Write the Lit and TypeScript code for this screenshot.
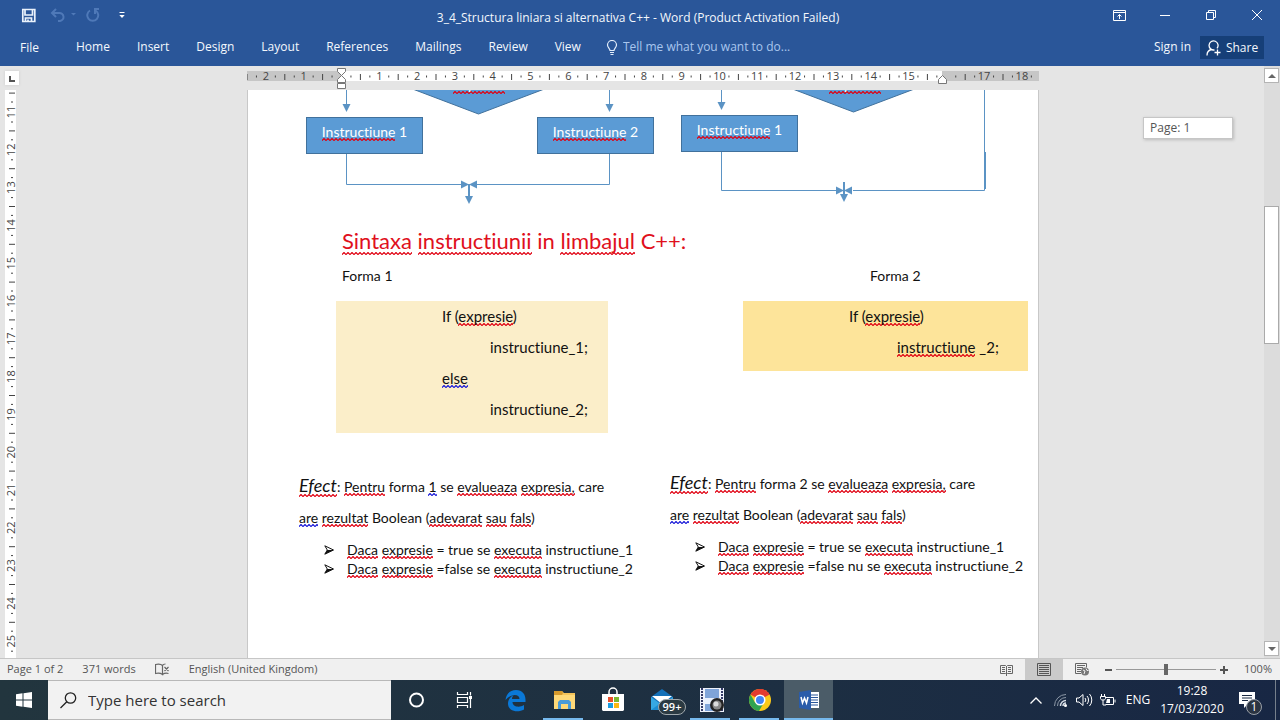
import { LitElement, html, svg, css } from "lit";
import { customElement } from "lit/decorators.js";

const CM = 37.8;

// "~word~" gets the red spelling mark, "^word^" the blue grammar mark.
const marked = (text: string) =>
  text.split(/(~[^~]+~|\^[^^]+\^)/).map((part) =>
    part.startsWith("~")
      ? html`<span class="spell">${part.slice(1, -1)}</span>`
      : part.startsWith("^")
        ? html`<span class="grammar">${part.slice(1, -1)}</span>`
        : part
  );

const range = (from: number, to: number) => Array.from({ length: to - from + 1 }, (_, i) => from + i);

@customElement("word-ribbon")
class WordRibbon extends LitElement {
  static styles = css`
    :host { display: block; background: #2a5699; color: #f4f8fd; font: 12px/16px "Open Sans", sans-serif; }
    button { all: unset; box-sizing: border-box; display: flex; align-items: center; justify-content: center; white-space: nowrap; }
    svg { display: block; }
    .title { display: grid; grid-template-columns: 1fr auto 1fr; height: 34px; align-items: center; }
    .quick { display: flex; align-items: center; padding: 0 0 4px 21px; }
    .quick .undo { margin-left: 14px; }
    .quick .redo { margin-left: 8px; }
    .quick .more { margin-left: 19px; }
    .name { padding: 1px 4px 0 0; }
    .window { display: flex; justify-content: flex-end; padding-bottom: 4px; }
    .window button { width: 46px; height: 30px; }
    .tabs { display: flex; height: 32px; align-items: flex-start; }
    nav { display: flex; gap: 1px; }
    nav button { height: 26px; padding: 0 13px; }
    nav .file { padding: 1px 23px 0 20px; }
    .tell { display: flex; align-items: center; gap: 5px; height: 26px; margin-left: 12px; flex: 1; }
    .tell input { all: unset; flex: 1; color: #b5cdf0; }
    .tell input::placeholder { color: #a9c6ee; opacity: 1; }
    .account { display: flex; align-items: center; gap: 9px; padding-right: 16px; }
    .account button { height: 26px; }
    .account .share { background: #163f78; height: 23px; width: 64px; gap: 5px; margin-top: 1px; }
  `;
  render() {
    return html`
      <div class="title">
        <div class="quick">
          <button aria-label="Save"><svg width="15" height="15" viewBox="0 0 15 15"><path d="M1.800 1.500h12v12h-12zM4 1.500v5.500h7.500V1.500M4.500 13.500v-3.500h6v3.500M7 11.500v2" fill="none" stroke="#eaf2fc" stroke-width="1.700"/></svg></button>
          <button class="undo" aria-label="Undo"><svg width="28" height="14" viewBox="0 0 28 14"><path d="M6 1L2 5l4 4M2 5h7a4 4 0 0 1 1 8H8" fill="none" stroke="#4f79b8" stroke-width="2"/><path d="M21 5h5l-2.500 2.500z" fill="#4f79b8"/></svg></button>
          <button class="redo" aria-label="Repeat"><svg width="14" height="14" viewBox="0 0 14 14"><path d="M8 1h5M9 1v5M9.500 2.500A5.500 5.500 0 1 1 4 2.500" fill="none" stroke="#4f79b8" stroke-width="2"/></svg></button>
          <button class="more" aria-label="Customise toolbar"><svg width="6" height="8" viewBox="0 0 6 8"><path d="M.5 1.500h5" stroke="#fff"/><path d="M.3 4h5.400L3 7z" fill="#fff"/></svg></button>
        </div>
        <div class="name">3_4_Structura liniara si alternativa C++ - Word (Product Activation Failed)</div>
        <div class="window">
          <button aria-label="Ribbon display options"><svg width="13" height="11" viewBox="0 0 13 11"><path d="M.5.5h12v10H.5zM.5 2.500h12M6.500 9V4.500M4.500 6.500l2-2 2 2" fill="none" stroke="#fff"/></svg></button>
          <button aria-label="Minimise"><svg width="10" height="10" viewBox="0 0 10 10"><path d="M0 5.500h10" stroke="#fff"/></svg></button>
          <button aria-label="Restore"><svg width="10" height="10" viewBox="0 0 10 10"><path d="M.5 2.500h7v7h-7zM2.500 2.500v-2h7v7h-2" fill="none" stroke="#fff"/></svg></button>
          <button aria-label="Close"><svg width="10" height="10" viewBox="0 0 10 10"><path d="M0 0l10 10M10 0L0 10" stroke="#fff"/></svg></button>
        </div>
      </div>
      <div class="tabs">
        <nav>
          <button class="file">File</button>
          ${["Home", "Insert", "Design", "Layout", "References", "Mailings", "Review", "View"].map((t) => html`<button>${t}</button>`)}
        </nav>
        <label class="tell">
          <svg width="12" height="15" viewBox="0 0 12 15"><path d="M4 10.500C4 8.500 1.500 7.500 1.500 5a4.500 4.500 0 0 1 9 0c0 2.500-2.500 3.500-2.500 5.500zM4 12.500h4M4.500 14.500h3" fill="none" stroke="#e4eefb" stroke-width="1.200"/></svg>
          <input type="text" aria-label="Tell me what you want to do" placeholder="Tell me what you want to do..." />
        </label>
        <div class="account">
          <button>Sign in</button>
          <button class="share"><svg width="15" height="16" viewBox="0 0 15 16"><path d="M1 15.500c0-3.500 2-5.500 4.500-6M8.500 9.800a4.500 4.500 0 1 1 2.500-1.500M5 9.300c1 .8 2.200 1 3.500 .5M11.500 9.500v6M8.500 12.500h6" fill="none" stroke="#fff" stroke-width="1.300"/></svg>Share</button>
        </div>
      </div>`;
  }
}

@customElement("word-document")
class WordDocument extends LitElement {
  static styles = css`
    :host { display: grid; grid-template: 24px minmax(0, 1fr) / 22px minmax(0, 1fr) 16px; min-height: 0; background: #e5e5e5; color: #111; position: relative; }
    svg { display: block; }
    .tabstop { all: unset; align-self: center; width: 14px; height: 14px; margin-left: 5px; background: #fff; box-shadow: 0 0 3px #ccc; }
    .hruler { display: flex; justify-content: center; }
    .vruler { width: 18px; overflow: hidden; }
    .num { font: 11px "Open Sans", sans-serif; fill: #444; text-anchor: middle; }
    .view { display: flex; justify-content: center; overflow: hidden; }
    .page { box-sizing: border-box; width: 792px; background: #fff; border: solid #c8c8c8; border-width: 0 1px; font: 14px/32px Lato, sans-serif; font-variant-ligatures: none; }
    .spell, .grammar { padding-bottom: 1px; background: left bottom / 4px 3px repeat-x; }
    .spell { background-image: url("data:image/svg+xml,%3Csvg xmlns='http://www.w3.org/2000/svg' width='4' height='3'%3E%3Cpath d='M-1 3.500L2 .5L5 3.500' fill='none' stroke='%23e00010' stroke-width='1.200'/%3E%3C/svg%3E"); }
    .grammar { background-image: url("data:image/svg+xml,%3Csvg xmlns='http://www.w3.org/2000/svg' width='4' height='3'%3E%3Cpath d='M-1 3.500L2 .5L5 3.500' fill='none' stroke='%231818d8' stroke-width='1.200'/%3E%3C/svg%3E"); }
    .diagram { position: relative; height: 130px; overflow: hidden; }
    .node { position: absolute; box-sizing: border-box; width: 117px; height: 37px; border: 1px solid #41719c; background: #5b9bd5; color: #fff; line-height: 28px; text-align: center; }
    .cond { position: absolute; color: #fff; line-height: 20px; top: -15px; }
    h1 { margin: 0; padding-left: 94px; font-size: 22px; line-height: 41px; font-weight: 400; color: #e0101c; }
    .forms { display: grid; grid-template-columns: 272px 285px; column-gap: 135px; padding-left: 88px; align-items: start; }
    .forms p { margin: 0; line-height: 29px; padding-left: 6px; }
    .forms .second { padding-left: 127px; }
    .code { margin: 11px 0 0; padding: 0 0 8px 106px; background: #fbeec9; font-size: 15px; line-height: 31px; }
    .code.strong { background: #fde49a; }
    .code .in { padding-left: 48px; }
    .effects { display: grid; grid-template-columns: 371px 1fr; padding: 33px 0 0 51px; }
    .effects p { margin: 0; height: 33px; white-space: nowrap; }
    .effects em { font-size: 18px; }
    .effects .first { padding-top: 3px; }
    ul { margin: 5px 0 0; padding: 0 0 0 25px; list-style: none; line-height: 19px; }
    li { display: flex; align-items: center; gap: 13px; white-space: nowrap; }
    .scroll { grid-column: 3; grid-row: 1 / 3; display: flex; flex-direction: column; background: #dcdcdc; padding: 2px 1px 2px 0; }
    .scroll button { all: unset; box-sizing: border-box; height: 15px; border: 1px solid #b4b4b4; background: #fff; display: grid; place-items: center; }
    .track { flex: 1; display: grid; grid-template-rows: 123fr 138fr 297fr; }
    .thumb { grid-row: 2; background: #fff; border: 1px solid #aaa; }
    .tip { position: absolute; right: 47px; top: 51px; box-sizing: border-box; width: 90px; height: 22px; border: 1px solid #c6c6c6; background: #fff; box-shadow: 1px 1px 3px #bbb; color: #555; font: 12px/20px "Open Sans", sans-serif; padding-left: 6px; }
  `;

  hruler() {
    const zero = 2.5 * CM;
    return html`<svg width="792" height="24" viewBox="0 0 792 24">
      <path d="M0 5h792v10H0z" fill="#c6c6c6"/><path d="M95 5h600v10H95z" fill="#fff"/>
      ${range(-2, 18).map((n) => {
        const x = zero + n * CM;
        return svg`${n === 0 || n === 16 ? "" : svg`<text class="num" x=${x} y="14">${Math.abs(n)}</text>`}
          <path d="M${x - CM / 4} 9.500v2M${x + CM / 4} 9.500v2M${x - CM / 2} 8v6" stroke="#444"/>`;
      })}
      <g fill="#fff" stroke="#777"><path d="M90.500 2.500h8v3l-4 4-4-4zM90.500 16.500v-3l4-4 4 4v3zM90.500 17.500h8v5h-8zM691.500 17.500v-4l4-4 4 4v4z"/></g>
    </svg>`;
  }

  vruler() {
    return html`<svg width="18" height="568" viewBox="0 0 18 568">
      <path d="M5 0h11v568H5z" fill="#fff"/>
      ${range(11, 25).map((n) => {
        const y = 22 + (n - 11) * CM;
        return svg`<text class="num" transform="translate(15 ${y}) rotate(-90)">${n}</text>
          <path d="M11 ${y - 10}h2M11 ${y + 10}h2M9 ${y - CM / 2}h6" stroke="#444"/>`;
      })}
    </svg>`;
  }

  bullet(text: string) {
    return html`<li><svg width="10" height="10" viewBox="0 0 10 10"><path d="M.8 .8L9.500 5L.8 9.200L3.300 5z" fill="none" stroke="#111"/><path d="M3.300 5h6.200L.8 9.200z" fill="#111"/></svg><span>${marked(text)}</span></li>`;
  }

  render() {
    return html`
      <button class="tabstop" aria-label="Tab selector"><svg width="14" height="14" viewBox="0 0 14 14"><path d="M5 5v5h5" fill="none" stroke="#555" stroke-width="2"/></svg></button>
      <div class="hruler">${this.hruler()}</div>
      <div class="vruler">${this.vruler()}</div>
      <div class="view">
        <article class="page">
          <div class="diagram">
            <svg width="789" height="130" viewBox="1 0 789 130">
              <g fill="#5b9bd5" stroke="#41719c"><path d="M163 -2L231.500 24L300 -2zM543 -2L606.500 22L670 -2z"/></g>
              <g fill="none" stroke="#5b93c4">
                <path d="M99.500 0v15M362.500 0v15M99.500 64v30.500H215M362.500 64v30.500H230M474.500 0v13M474.500 62v38.500H590M737.500 0v100.500H606"/>
                <path d="M222 94v14M597 92v12M738 62v37" stroke-width="2"/>
              </g>
              <path d="M95.500 14h8l-4 8zM358.500 14h8l-4 8zM470.500 12h8l-4 8zM214 90.500l8 4-8 4zM230 90.500l-8 4 8 4zM218 106h8l-4 8zM589 96.500l8 4-8 4zM605 96.500l-8 4 8 4zM593 104h8l-4 8z" fill="#5b93c4"/>
            </svg>
            <div class="cond" style="left:205px">${marked("~Expresie~")}</div>
            <div class="cond" style="left:581px">${marked("~Expresie~")}</div>
            <div class="node" style="left:58px;top:27px">${marked("~Instructiune~ 1")}</div>
            <div class="node" style="left:289px;top:27px">${marked("~Instructiune~ 2")}</div>
            <div class="node" style="left:433px;top:25px">${marked("~Instructiune~ 1")}</div>
          </div>
          <h1>${marked("~Sintaxa~ ~instructiunii~ in ~limbajul~ C++:")}</h1>
          <section class="forms">
            <p>Forma 1</p>
            <p class="second">Forma 2</p>
            <div class="code">
              <div>${marked("If (~expresie~)")}</div>
              <div class="in">instructiune_1;</div>
              <div>${marked("^else^")}</div>
              <div class="in">instructiune_2;</div>
            </div>
            <div class="code strong">
              <div>${marked("If (~expresie~)")}</div>
              <div class="in">${marked("~instructiune~ _2;")}</div>
            </div>
          </section>
          <section class="effects">
            <div class="first">
              <p><em>${marked("~Efect~")}</em>${marked(": ~Pentru~ forma ^1^ se ~evalueaza~ ~expresia,~ care")}</p>
              <p>${marked("^are^ ~rezultat~ Boolean (~adevarat~ ~sau~ ~fals~)")}</p>
              <ul>
                ${this.bullet("~Daca~ ~expresie~ = true se ~executa~ instructiune_1")}
                ${this.bullet("~Daca~ ~expresie~ =false se ~executa~ instructiune_2")}
              </ul>
            </div>
            <div>
              <p><em>${marked("~Efect~")}</em>${marked(": ~Pentru~ forma 2 se ~evalueaza~ ~expresia,~ care")}</p>
              <p>${marked("^are^ ~rezultat~ Boolean (~adevarat~ ~sau~ ~fals~)")}</p>
              <ul>
                ${this.bullet("~Daca~ ~expresie~ = true se ~executa~ instructiune_1")}
                ${this.bullet("~Daca~ ~expresie~ =false nu se ~executa~ instructiune_2")}
              </ul>
            </div>
          </section>
        </article>
      </div>
      <div class="scroll">
        <button aria-label="Scroll up"><svg width="8" height="4" viewBox="0 0 8 4"><path d="M0 4l4-4 4 4z" fill="#666"/></svg></button>
        <div class="track"><div class="thumb"></div></div>
        <button aria-label="Scroll down"><svg width="8" height="4" viewBox="0 0 8 4"><path d="M0 0l4 4 4-4z" fill="#666"/></svg></button>
      </div>
      <div class="tip">Page: 1</div>`;
  }
}

@customElement("word-status")
class WordStatus extends LitElement {
  static styles = css`
    :host { display: flex; align-items: center; height: 22px; box-sizing: border-box; border-top: 1px solid #c6c6c6; background: #f0f0f0; color: #555; font: 11px/18px "Open Sans", sans-serif; padding: 0 8px 0 7px; }
    button { all: unset; display: grid; place-items: center; height: 21px; }
    svg { display: block; }
    .facts { display: flex; gap: 19px; flex: 1; align-items: center; }
    .facts span, output { padding-bottom: 2px; }
    .views button { width: 38px; }
    .views { display: flex; }
    .views .on { background: #cacaca; }
    .zoom { display: flex; align-items: center; gap: 4px; margin-left: 4px; }
    input { appearance: none; width: 100px; height: 11px; margin: 0; background: linear-gradient(#999, #999) center / 100% 1px no-repeat; }
    input::-webkit-slider-thumb { appearance: none; width: 4px; height: 11px; background: #666; }
    output { margin-left: 12px; }
  `;
  render() {
    return html`
      <div class="facts">
        <span>Page 1 of 2</span><span>371 words</span>
        <button aria-label="Proofing"><svg width="15" height="13" viewBox="0 0 15 13"><path d="M7.500 2.500C6 1 3 1 .5 1.500v9c2.500-.5 5-.5 7 1zM7.500 11.500V2.500C8 1.500 9 1 10.500 1M7.500 11.500c2-1.500 4-1.500 6-1M9.500 4l4 4M13.500 4l-4 4" fill="none" stroke="#666" stroke-width="1.200"/></svg></button>
        <span>English (United Kingdom)</span>
      </div>
      <div class="views">
        <button aria-label="Read mode"><svg width="13" height="12" viewBox="0 0 13 12"><path d="M.5 1.500h5l1 1 1-1h5v8h-5l-1 1-1-1h-5zM6.500 2v10M2 3.500h3M2 5.500h3M2 7.500h3M8 3.500h3M8 5.500h3M8 7.500h3" fill="none" stroke="#666"/></svg></button>
        <button class="on" aria-label="Print layout"><svg width="14" height="13" viewBox="0 0 14 13"><path d="M.5.5h13v12H.5zM2 2.500h10M2 4.500h10M2 6.500h10M2 8.500h10M2 10.500h10" fill="none" stroke="#555"/></svg></button>
        <button aria-label="Web layout"><svg width="15" height="13" viewBox="0 0 15 13"><path d="M6 10.500H.5V.5h11v4M2 2.500h8M2 4.500h6M2 6.500h4M2 8.500h4" fill="none" stroke="#666"/><circle cx="10" cy="8.500" r="4" fill="#777"/><path d="M8 7l2 1-1 3M11 5.500l1 2 1.500 0" fill="none" stroke="#eee"/></svg></button>
      </div>
      <div class="zoom">
        <button aria-label="Zoom out"><svg width="7" height="10" viewBox="0 0 7 10"><path d="M0 5h7" stroke="#555" stroke-width="2"/></svg></button>
        <input type="range" min="0" max="100" value="50" aria-label="Zoom" />
        <button aria-label="Zoom in"><svg width="8" height="10" viewBox="0 0 8 10"><path d="M0 5h8M4 1v8" stroke="#555" stroke-width="2"/></svg></button>
        <output>100%</output>
      </div>`;
  }
}

const APPS = [
  { name: "Cortana", open: false, icon: svg`<circle cx="13.500" cy="14" r="6.500" fill="none" stroke="#fff" stroke-width="2"/>` },
  { name: "Task View", open: false, icon: svg`<path d="M5.500 6v2.500h10V6M5.500 22v-2.500h10V22M5.500 11.500h10v5h-10zM18.500 6v3.500M18.500 13v9" fill="none" stroke="#fff" stroke-width="1.200"/><path d="M17 10h3v3h-3z" fill="#fff"/>` },
  { name: "Edge", open: false, icon: svg`<path d="M4.500 14C5 8 9 4 15 4c6.500 0 9.500 4.500 9.500 9.500v2.500H11.500c0 5 7 6 11.500 3v4.500c-6 3.500-16 2-16-6 0-4 2.500-7 5.500-8-1 1-1.500 2-1.500 3.500h7.500c0-5-8-6-14 1z" fill="#0a78d7"/>` },
  { name: "File Explorer", open: true, icon: svg`<path d="M4 5h8l2 2h11v16H4z" fill="#f5c45a"/><path d="M4 5h8l1 2-1 2H4z" fill="#d79a2c"/><path d="M4 9h21v14H4z" fill="#ffd978"/><path d="M8 23v-7l2-2h9l2 2v7h-3v-5h-7v5z" fill="#4a9bd8"/>` },
  { name: "Store", open: false, icon: svg`<path d="M10 8V6a4 4 0 0 1 8 0v2" fill="none" stroke="#fff" stroke-width="1.500"/><path d="M3 8h22v16l-1 1H4l-1-1z" fill="#fff"/><path d="M9 11h5v5H9z" fill="#e8502c"/><path d="M15 11h5v5h-5z" fill="#7cb82f"/><path d="M9 17h5v5H9z" fill="#1b9de2"/><path d="M15 17h5v5h-5z" fill="#fbb812"/>` },
  { name: "Mail", open: false, badge: "99+", icon: svg`<path d="M3 11l11-8 11 8v13H3z" fill="#1470b8"/><path d="M4 10h20l-10 8z" fill="#fff"/><path d="M3 11l11 8 11-8v13H3z" fill="#36a8e4"/><path d="M3 24l11-8 11 8z" fill="#1c8cd2"/>` },
  { name: "Media Player", open: true, icon: svg`<path d="M3 2h24v24H3z" fill="#eef2fb"/><path d="M8 3h14v22H8z" fill="#7fa4d8"/><path d="M8 12h14v6H8z" fill="#e8f0fc"/><path d="M5 2v24M25 2v24" stroke="#333a66" stroke-width="2" stroke-dasharray="2 1"/><circle cx="20" cy="19" r="7" fill="#222"/><circle cx="20" cy="19" r="4.500" fill="#888"/><circle cx="19" cy="18" r="2.500" fill="#dcdcdc"/>` },
  { name: "Chrome", open: true, icon: svg`<circle cx="14" cy="14" r="11" fill="#fbc918"/><path d="M14 14L4.500 8.500A11 11 0 0 1 23.500 8.500z" fill="#e33b2e"/><path d="M14 3a11 11 0 0 1 9.500 6H14z" fill="#e33b2e"/><path d="M4.500 8.500A11 11 0 0 0 13 25l5-8.500-9-0z" fill="#2fa352"/><circle cx="14" cy="14" r="5.500" fill="#fff"/><circle cx="14" cy="14" r="4" fill="#4285f4"/>` },
  { name: "Word", open: true, active: true, icon: svg`<path d="M14 6h10v16H14z" fill="#fff"/><path d="M16 9h7M16 11.500h7M16 14h7M16 16.500h7M16 19h7" stroke="#2a5699"/><path d="M4 6l12-2v20L4 22z" fill="#2a5caa"/><path d="M6 11l1.500 6L9.500 12l2 5L13 11" fill="none" stroke="#fff" stroke-width="1.500"/>` },
];

@customElement("task-bar")
class TaskBar extends LitElement {
  static styles = css`
    :host { display: flex; height: 40px; background: linear-gradient(90deg, #22353e, #1d2f42 60%, #182744); color: #fff; font: 12px/18px "Open Sans", sans-serif; }
    button { all: unset; box-sizing: border-box; display: grid; place-items: center; position: relative; }
    svg { display: block; }
    .start { width: 48px; }
    .search { box-sizing: border-box; flex: 0 1 343px; display: flex; align-items: center; gap: 11px; margin-right: 1px; padding-left: 12px; background: #f2f2f2; border: solid #b8b8b8; border-width: 1px 0; }
    .search input { all: unset; flex: 1; font-size: 15px; line-height: 20px; }
    .search input::placeholder { color: #333; opacity: 1; }
    .app { width: 49px; }
    .open::after { content: ""; position: absolute; left: 4px; right: 5px; bottom: 0; height: 2px; background: #76b9ed; }
    .active { background: #4b5c68; }
    .active::after { left: 0; right: 0; }
    .badge { position: absolute; left: 21px; top: 19px; width: 26px; height: 14px; border: 1px solid #a0a8ac; border-radius: 8px; background: #2b3a42; font-size: 11px; line-height: 14px; font-weight: 600; text-align: center; }
    .tray { margin-left: auto; display: flex; align-items: stretch; }
    .tray .small { width: 24px; }
    .lang { width: 36px; }
    .clock { width: 72px; text-align: center; padding: 2px 0; }
    .note { width: 38px; }
    .count { position: absolute; left: 18px; top: 19px; width: 14px; height: 14px; border: 1px solid #9aa0a8; border-radius: 50%; background: #2b3442; line-height: 14px; text-align: center; }
    .desk { width: 5px; border-left: 1px solid #76808c; }
    .tray .note { margin-right: 9px; }
  `;
  render() {
    return html`
      <button class="start" aria-label="Start"><svg width="16" height="16" viewBox="0 0 16 16"><path d="M0 2.200L6.500 1.300V7.500H0zM7.500 1.200L16 0v7.500H7.500zM0 8.500h6.500v6.200L0 13.800zM7.500 8.500H16V16l-8.500-1.200z" fill="#fff"/></svg></button>
      <label class="search">
        <svg width="17" height="17" viewBox="0 0 17 17"><circle cx="10.500" cy="6" r="5.200" fill="none" stroke="#222" stroke-width="1.300"/><path d="M6.800 9.800L.5 16" stroke="#222" stroke-width="1.300"/></svg>
        <input type="text" aria-label="Search" placeholder="Type here to search" />
      </label>
      ${APPS.map((a) => html`<button class="app ${a.open ? "open" : ""} ${a.active ? "active" : ""}" aria-label=${a.name}>
        <svg width="28" height="28" viewBox="0 0 28 28">${a.icon}</svg>${a.badge ? html`<span class="badge">${a.badge}</span>` : ""}
      </button>`)}
      <div class="tray">
        <button class="small" aria-label="Show hidden icons"><svg width="12" height="7" viewBox="0 0 12 7"><path d="M.5 6.500L6 1l5.500 5.500" fill="none" stroke="#fff" stroke-width="1.300"/></svg></button>
        <button class="small" aria-label="Network"><svg width="13" height="13" viewBox="0 0 13 13"><g fill="none" stroke="#d8dee6"><path d="M9 12a3 3 0 0 1 3-3M6.500 12A5.500 5.500 0 0 1 12 6.500" stroke-width="1.400"/><path d="M3.500 12A8.500 8.500 0 0 1 12 3.500M.5 12A11.500 11.500 0 0 1 12 .5" stroke="#8d99a8"/></g><circle cx="11.500" cy="11.500" r="1.500" fill="#fff"/></svg></button>
        <button class="small" aria-label="Volume"><svg width="17" height="14" viewBox="0 0 17 14"><path d="M.5 5v4h2.500l4 3.500v-11L3 5zM9 5a3 3 0 0 1 0 4M11 3a6 6 0 0 1 0 8M13.500 1a9 9 0 0 1 0 12" fill="none" stroke="#fff"/></svg></button>
        <button class="small" aria-label="Battery"><svg width="16" height="12" viewBox="0 0 16 12"><path d="M5.500 3.500h8v7h-8M15 5.500v3M1.500 0v2.500M4.500 0v2.500M.5 2.500h5v2c0 1-1 1.500-2.500 1.500s-2.500-.5-2.500-1.500zM3 6v5h3" fill="none" stroke="#fff"/><path d="M7 5h3v4H6z" fill="#fff"/></svg></button>
        <button class="lang">ENG</button>
        <button class="clock"><span>19:28<br />17/03/2020</span></button>
        <button class="note" aria-label="Notifications"><svg width="16" height="16" viewBox="0 0 16 16"><path d="M0 0h16v12H9l-4 4v-4H0z" fill="#fff"/><path d="M3 3.500h10M3 6h10M3 8.500h6" stroke="#1b2a42"/></svg><span class="count">1</span></button>
        <button class="desk" aria-label="Show desktop"></button>
      </div>`;
  }
}

@customElement("app-root")
class AppRoot extends LitElement {
  static styles = css`
    :host { display: grid; grid-template-rows: auto minmax(0, 1fr) auto auto; height: 100vh; overflow: hidden; }
  `;
  render() {
    return html`<word-ribbon></word-ribbon><word-document></word-document><word-status></word-status><task-bar></task-bar>`;
  }
}
